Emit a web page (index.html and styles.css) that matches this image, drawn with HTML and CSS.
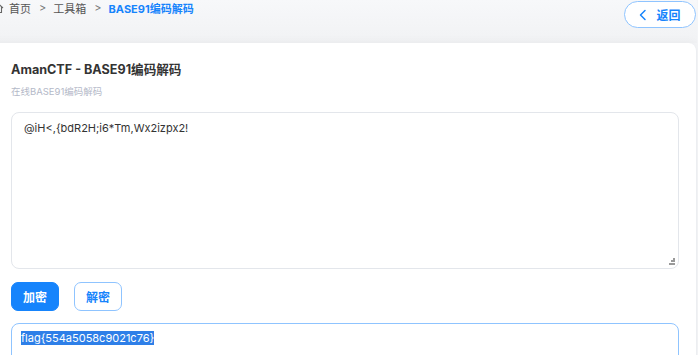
FILE: index.html
```html
<!DOCTYPE html>
<html lang="zh">
<head>
<meta charset="utf-8">
<link rel="stylesheet" href="styles.css">
</head>
<body>
<div class="page">
  <div class="topbar">
    <nav class="crumbs">
      <svg class="home" width="12" height="12" viewBox="0 0 12 12"><path d="M1 6 L6 1.5 L11 6 M2.5 5 V10.5 H9.5 V5" fill="none" stroke="#666" stroke-width="1.1"/></svg>
      <span class="crumb">首页</span>
      <span class="sep">&gt;</span>
      <span class="crumb">工具箱</span>
      <span class="sep">&gt;</span>
      <span class="crumb current">BASE91编码解码</span>
    </nav>
    <button class="back">
      <svg width="8" height="12" viewBox="0 0 8 12"><path d="M6 1.5 L1.5 6 L6 10.5" fill="none" stroke="#1684fc" stroke-width="1.5" stroke-linecap="round" stroke-linejoin="round"/></svg>
      <span>返回</span>
    </button>
  </div>
  <section class="card">
    <h1 class="title">AmanCTF - BASE91编码解码</h1>
    <p class="subtitle">在线BASE91编码解码</p>
    <div class="field input">@iH&lt;,{bdR2H;i6*Tm,Wx2izpx2!<span class="grip"></span></div>
    <div class="actions">
      <button class="btn primary">加密</button>
      <button class="btn ghost">解密</button>
    </div>
    <div class="field output"><span class="sel">flag{554a5058c9021c76}</span></div>
  </section>
</div>
</body>
</html>
```

FILE: styles.css
```css
* { box-sizing: border-box; }
html, body { margin: 0; padding: 0; }
body {
  width: 698px;
  height: 355px;
  overflow: hidden;
  background: #f4f5f7;
  font-family: Inter, "Noto Sans CJK SC", sans-serif;
  color: #333;
}
.page {
  margin-left: -8px;
  width: 705px;
}
.topbar {
  height: 43px;
  display: flex;
  justify-content: space-between;
  align-items: flex-start;
  background: linear-gradient(#f7f8fa, #f1f2f4);
}
.crumbs {
  display: flex;
  align-items: center;
  height: 16px;
  font-size: 11px;
  color: #555;
}
.home { margin-right: 5px; }
.sep { margin: 0 7px 0 8px; color: #777; font-size: 11px; }
.crumb.current { color: #1684fc; font-weight: 700; }
.back {
  margin-top: 1px;
  margin-right: 1px;
  width: 72px;
  height: 27px;
  border: 1.5px solid #8fc4ff;
  border-radius: 14px;
  background: #fff;
  color: #1684fc;
  font-family: inherit;
  font-size: 12px;
  font-weight: 700;
  display: flex;
  align-items: center;
  justify-content: center;
  gap: 9px;
  padding: 0;
}
.card {
  background: #fff;
  border-radius: 0 8px 0 0;
  border-right: 1px solid #eceef1;
  box-shadow: 0 -2px 8px rgba(0,0,0,0.03);
  padding: 17px 18px 0 19px;
  height: 312px;
}
.title {
  margin: 0;
  font-size: 12.6px;
  font-weight: 700;
  line-height: 20px;
  color: #333;
}
.subtitle {
  margin: 5px 0 0;
  font-size: 9.5px;
  line-height: 14px;
  color: #b4b9c8;
}
.field {
  position: relative;
  width: 668px;
  border: 1px solid #e3e6eb;
  border-radius: 8px;
  background: #fff;
  font-size: 11px;
  line-height: 16px;
  color: #333;
}
.input {
  margin-top: 13px;
  height: 157px;
  padding: 7px 12px;
}
.grip {
  position: absolute;
  right: 3px;
  bottom: 3px;
  width: 7px;
  height: 7px;
  background:
    radial-gradient(circle, #999 0.8px, transparent 1px) 5px 0 / 2px 2px no-repeat,
    radial-gradient(circle, #999 0.8px, transparent 1px) 3px 2px / 2px 2px no-repeat,
    radial-gradient(circle, #999 0.8px, transparent 1px) 5px 2px / 2px 2px no-repeat,
    radial-gradient(circle, #999 0.8px, transparent 1px) 1px 5px / 2px 2px no-repeat,
    radial-gradient(circle, #999 0.8px, transparent 1px) 3px 5px / 2px 2px no-repeat,
    radial-gradient(circle, #999 0.8px, transparent 1px) 5px 5px / 2px 2px no-repeat;
}
.actions {
  display: flex;
  gap: 15px;
  margin-top: 13px;
}
.btn {
  width: 48px;
  height: 29px;
  border-radius: 7px;
  font-family: inherit;
  font-size: 12px;
  font-weight: 700;
  padding: 0;
}
.primary { background: #1684fc; border: 1px solid #1684fc; color: #fff; }
.ghost { background: #fff; border: 1.5px solid #8fc4ff; color: #1684fc; }
.output {
  margin-top: 12px;
  height: 60px;
  border: 1.5px solid #8fc4ff;
  padding: 6px 9px;
}
.sel {
  background: #2e7fe8;
  color: #fff;
}
```
